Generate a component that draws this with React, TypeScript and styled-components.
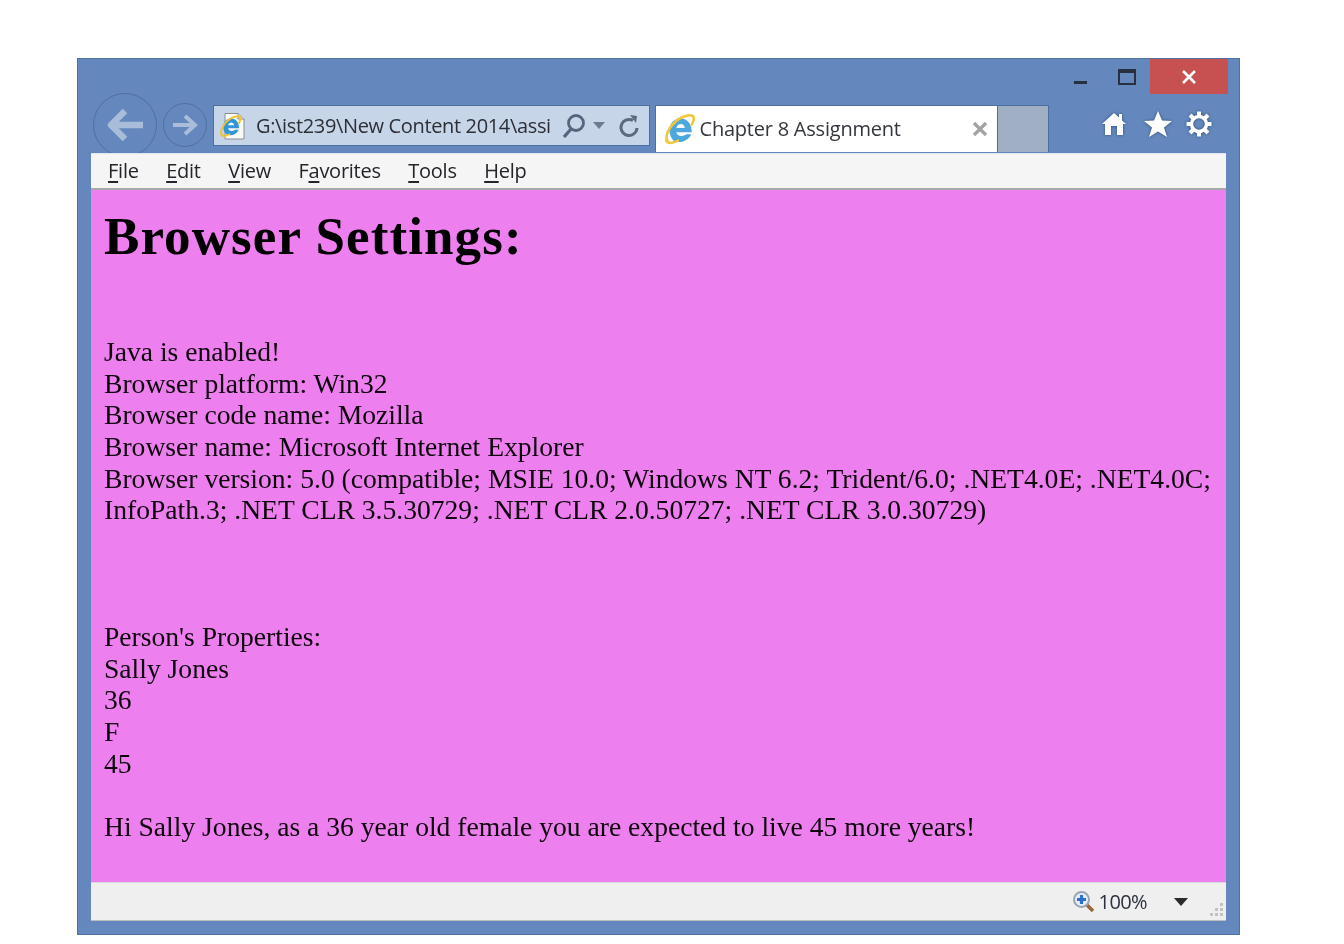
import React from "react";
import styled, { createGlobalStyle } from "styled-components";

const Global = createGlobalStyle`
  html, body { margin: 0; padding: 0; background: #fff; }
  body { width: 1344px; height: 944px; overflow: hidden; }
`;

const uiFont = `"Open Sans", "Noto Sans", sans-serif`;

const Page = styled.div`
  padding: 58px 0 0 77px;
`;
const Window = styled.div`
  width: 1163px;
  height: 877px;
  box-sizing: border-box;
  background: #6488bd;
  border: 1px solid #50729f;
  border-top-color: #4f74a4;
  padding: 0 13px 13px;
  display: flex;
  flex-direction: column;
  filter: blur(0.45px);
`;
const Chrome = styled.div`
  height: 94px;
  flex: none;
  position: relative;
  display: flex;
  flex-direction: column;
`;
const Caption = styled.div`
  height: 36px;
  flex: none;
  display: flex;
  justify-content: flex-end;
  align-items: flex-start;
  margin-right: -2px;
`;
const CaptionBtn = styled.div<{ $w: number; $bg?: string }>`
  width: ${(p) => p.$w}px;
  height: 35px;
  background: ${(p) => p.$bg || "transparent"};
  display: flex;
  align-items: center;
  justify-content: center;
`;
const NavRow = styled.div`
  flex: 1;
  display: flex;
  align-items: flex-start;
  position: relative;
`;
const NavButtons = styled.div`
  width: 122px;
  flex: none;
  height: 60px;
  margin-top: -2px;
  position: relative;
  overflow: hidden;
  margin-left: 1px;
`;
const BackBtn = styled.div`
  position: absolute;
  left: 1px;
  top: 0;
  width: 64px;
  height: 64px;
  box-sizing: border-box;
  border: 1.5px solid #4f709f;
  border-radius: 50%;
  display: flex;
  align-items: center;
  justify-content: center;
`;
const FwdBtn = styled.div`
  position: absolute;
  left: 71px;
  top: 10px;
  width: 44px;
  height: 44px;
  box-sizing: border-box;
  border: 1.5px solid #4f709f;
  border-radius: 50%;
  display: flex;
  align-items: center;
  justify-content: center;
`;
const AddressBar = styled.div`
  width: 437px;
  height: 41px;
  margin-top: 10px;
  margin-left: -1px;
  box-sizing: border-box;
  flex: none;
  background: #c7d5e8;
  border: 1.5px solid #4d6f9e;
  display: flex;
  align-items: center;
  padding-left: 3px;
`;
const AddressText = styled.div`
  font: 400 20px/28px ${uiFont};
  letter-spacing: -0.35px;
  color: #2c2f36;
  width: 297px;
  margin-left: 9px;
  overflow: hidden;
  white-space: nowrap;
  flex: none;
`;
const AddressIcons = styled.div`
  display: flex;
  align-items: center;
  margin-left: 9px;
  gap: 7px;
`;
const RefreshIcon = styled.svg`
  margin-left: 6px;
`;
const Tab = styled.div`
  width: 343px;
  height: 47px;
  box-sizing: border-box;
  margin-top: 10px;
  margin-left: 5px;
  flex: none;
  background: #fff;
  border: 1.5px solid #4d6f9e;
  border-bottom: none;
  display: flex;
  align-items: center;
  padding: 0 9px 0 6px;
`;
const TabTitle = styled.div`
  font: 400 20px/24px ${uiFont};
  letter-spacing: -0.22px;
  color: #33363b;
  margin-left: 3.5px;
  flex: 1;
  white-space: nowrap;
`;
const NewTab = styled.div`
  width: 51px;
  height: 47px;
  margin-top: 10px;
  box-sizing: border-box;
  flex: none;
  background: #a0afc4;
  border: 1.5px solid #4d6f9e;
  border-bottom: none;
  border-left: none;
`;
const Tools = styled.div`
  display: flex;
  align-items: center;
  gap: 12px;
  margin-left: 51px;
  margin-top: 15px;
  flex: none;
  svg { filter: drop-shadow(0 0 1.5px #2f4a75); }
`;
const MenuBar = styled.div`
  height: 37px;
  flex: none;
  box-sizing: border-box;
  background: #f5f5f5;
  border-top: 1px solid #dfe5ee;
  border-bottom: 2px solid #a9a9a9;
  display: flex;
  align-items: center;
  padding-left: 17px;
  gap: 27.5px;
`;
const MenuItem = styled.span`
  font: 400 20px/24px ${uiFont};
  letter-spacing: -0.25px;
  color: #23252b;
  u { text-underline-offset: 3px; text-decoration-thickness: 1.5px; }
`;
const Content = styled.main`
  flex: 1;
  min-height: 0;
  background: #ee7fee;
  padding: 0 0 0 13px;
  font-family: "Liberation Serif", "Times New Roman", serif;
  color: #0c060c;
  overflow: hidden;
`;
const Heading = styled.h1`
  font-size: 53px;
  line-height: 61px;
  font-weight: 700;
  letter-spacing: 1.1px;
  margin: 16px 0 69px;
  color: #000;
`;
const Block = styled.div<{ $gap?: number }>`
  font-size: 27.6px;
  line-height: 31.65px;
  white-space: nowrap;
  margin-bottom: ${(p) => p.$gap ?? 0}px;
`;
const StatusBar = styled.div`
  height: 39px;
  flex: none;
  box-sizing: border-box;
  background: #efefef;
  border-top: 1px solid #d9d9d9;
  border-bottom: 1px solid #bdbdbd;
  display: flex;
  align-items: center;
  justify-content: flex-end;
  position: relative;
  padding-right: 38px;
`;
const Zoom = styled.span`
  font: 400 20px/24px ${uiFont};
  letter-spacing: -0.6px;
  color: #2c3140;
  margin-left: 3px;
  margin-right: 27px;
`;
const Grip = styled.svg`
  position: absolute;
  right: 2px;
  bottom: 2px;
`;

const orbit = "M5 27 C2 22 9 9 20 4.5 C25 2.5 30 2 30 6 C30 8 29 10 28 12";
const orbitLow = "M4 27 C6 31 11 29 15 27";
const eShape = "M7 17 C7 10 12 6 17.5 6 C24 6 28 11 28 19 L13.5 19 C13.8 22.5 19 24 23 21 L27.5 21 C24.5 28 16 30 11 27 C8.5 25 7 21 7 17 Z M13.5 15 L21.5 15 C21 10 14.5 10 13.5 15 Z";

const IeLogo = ({ size }: { size: number }) => (
  <svg width={size} height={size} viewBox="0 0 32 32" fill="none">
    <path d={eShape} fill="#4aa8de" fillRule="evenodd" />
    <path d={orbit} stroke="#f0c63a" strokeWidth="2.4" strokeLinecap="round" />
    <path d={orbitLow} stroke="#f0c63a" strokeWidth="2.4" strokeLinecap="round" />
  </svg>
);

const PageIcon = () => (
  <svg width="30" height="30" viewBox="0 0 30 30" fill="none">
    <path d="M8 2.5 H21 L27 8 V28 H8 Z" fill="#f8f8f4" stroke="#8a8f96" strokeWidth="1" />
    <path d="M21 2.5 V8 H27" fill="#dde" stroke="#8a8f96" strokeWidth="1" />
    <g transform="translate(1 3) scale(0.75)">
      <path d={eShape} fill="#2f96d8" fillRule="evenodd" />
      <path d={orbit} stroke="#efc52f" strokeWidth="2.6" strokeLinecap="round" />
      <path d={orbitLow} stroke="#efc52f" strokeWidth="2.6" strokeLinecap="round" />
    </g>
  </svg>
);

export default function App() {
  return (
    <>
      <Global />
      <Page>
        <Window>
          <Chrome>
            <Caption>
              <CaptionBtn $w={48}>
                <svg width="14" height="14" viewBox="0 0 14 14"><rect x="1" y="11" width="13" height="3" fill="#26303f" /></svg>
              </CaptionBtn>
              <CaptionBtn $w={46}>
                <svg width="18" height="16" viewBox="0 0 18 16" fill="none"><rect x="1" y="1" width="16" height="14" stroke="#26303f" strokeWidth="2" /><rect x="1" y="1" width="16" height="3" fill="#26303f" /></svg>
              </CaptionBtn>
              <CaptionBtn $w={78} $bg="#c75050">
                <svg width="16" height="16" viewBox="0 0 16 16"><path d="M2 2 L14 14 M14 2 L2 14" stroke="#fff" strokeWidth="2.6" /></svg>
              </CaptionBtn>
            </Caption>
            <NavRow>
              <NavButtons>
                <BackBtn>
                  <svg width="38" height="36" viewBox="0 0 38 36" fill="none"><path d="M19 4 L5 18 L19 32 M6 18 H37" stroke="#a9bcd9" strokeWidth="6.5" strokeLinejoin="round" /></svg>
                </BackBtn>
                <FwdBtn>
                  <svg width="26" height="24" viewBox="0 0 26 24" fill="none"><path d="M13 3 L23 12 L13 21 M22 12 H1" stroke="#a9bcd9" strokeWidth="4" /></svg>
                </FwdBtn>
              </NavButtons>
              <AddressBar>
                <PageIcon />
                <AddressText>G:\ist239\New Content 2014\assi</AddressText>
                <AddressIcons>
                  <svg width="24" height="26" viewBox="0 0 24 26" fill="none"><circle cx="14" cy="10" r="7.5" stroke="#54657e" strokeWidth="2.8" /><path d="M9 16 L2 24" stroke="#54657e" strokeWidth="3.4" /></svg>
                  <svg width="12" height="7" viewBox="0 0 12 7"><path d="M0 0 H12 L6 7 Z" fill="#6d7c92" /></svg>
                  <RefreshIcon width="22" height="24" viewBox="0 0 22 24" fill="none"><path d="M15 6.5 A8 8 0 1 0 19 14" stroke="#5b6a80" strokeWidth="3" /><path d="M12 1 L19 2 L18 9 Z" fill="#5b6a80" /></RefreshIcon>
                </AddressIcons>
              </AddressBar>
              <Tab>
                <IeLogo size={34} />
                <TabTitle>Chapter 8 Assignment</TabTitle>
                <svg width="16" height="16" viewBox="0 0 16 16"><path d="M2 2 L14 14 M14 2 L2 14" stroke="#a3a3a3" strokeWidth="3.2" /></svg>
              </Tab>
              <NewTab />
              <Tools>
                <svg width="31" height="26" viewBox="0 0 31 26"><path d="M14 2 L19 6.5 V3 H22 V9.5 L26 13 L23 13 V24 H17 V15 H11 V24 H5 V13 H2 Z" fill="#fff" /></svg>
                <svg width="30" height="28" viewBox="0 0 30 28"><path d="M15 1 L19 10.5 L29 11 L21 17.5 L24 27 L15 21.5 L6 27 L9 17.5 L1 11 L11 10.5 Z" fill="#fff" /></svg>
                <svg width="28" height="28" viewBox="0 0 28 28" fill="none"><circle cx="14" cy="14" r="7.5" stroke="#fff" strokeWidth="3.4" /><path d="M14 1.5 V7 M14 21 V26.5 M1.5 14 H7 M21 14 H26.5 M5 5 L9 9 M19 19 L23 23 M23 5 L19 9 M9 19 L5 23" stroke="#fff" strokeWidth="4" /></svg>
              </Tools>
            </NavRow>
          </Chrome>
          <MenuBar>
            <MenuItem><u>F</u>ile</MenuItem>
            <MenuItem><u>E</u>dit</MenuItem>
            <MenuItem><u>V</u>iew</MenuItem>
            <MenuItem>F<u>a</u>vorites</MenuItem>
            <MenuItem><u>T</u>ools</MenuItem>
            <MenuItem><u>H</u>elp</MenuItem>
          </MenuBar>
          <Content>
            <Heading>Browser Settings:</Heading>
            <Block $gap={95}>
              Java is enabled!<br />
              Browser platform: Win32<br />
              Browser code name: Mozilla<br />
              Browser name: Microsoft Internet Explorer<br />
              Browser version: 5.0 (compatible; MSIE 10.0; Windows NT 6.2; Trident/6.0; .NET4.0E; .NET4.0C;<br />
              InfoPath.3; .NET CLR 3.5.30729; .NET CLR 2.0.50727; .NET CLR 3.0.30729)
            </Block>
            <Block $gap={32}>
              Person's Properties:<br />
              Sally Jones<br />
              36<br />
              F<br />
              45
            </Block>
            <Block>Hi Sally Jones, as a 36 year old female you are expected to live 45 more years!</Block>
          </Content>
          <StatusBar>
            <svg width="24" height="24" viewBox="0 0 24 24" fill="none"><path d="M14 14 L21 21" stroke="#96683a" strokeWidth="3.5" /><circle cx="9.5" cy="9.5" r="7.5" fill="#e8eef5" stroke="#9aa5b3" strokeWidth="2" /><path d="M9.5 5 V14 M5 9.5 H14" stroke="#2b6fd0" strokeWidth="3.2" /></svg>
            <Zoom>100%</Zoom>
            <svg width="14" height="8" viewBox="0 0 14 8"><path d="M0 0 H14 L7 8 Z" fill="#2a2a2a" /></svg>
            <Grip width="16" height="16" viewBox="0 0 16 16" fill="#c2c2c2">
              <rect x="12" y="1" width="3" height="3" /><rect x="7" y="6" width="3" height="3" /><rect x="12" y="6" width="3" height="3" /><rect x="2" y="11" width="3" height="3" /><rect x="7" y="11" width="3" height="3" /><rect x="12" y="11" width="3" height="3" />
            </Grip>
          </StatusBar>
        </Window>
      </Page>
    </>
  );
}
